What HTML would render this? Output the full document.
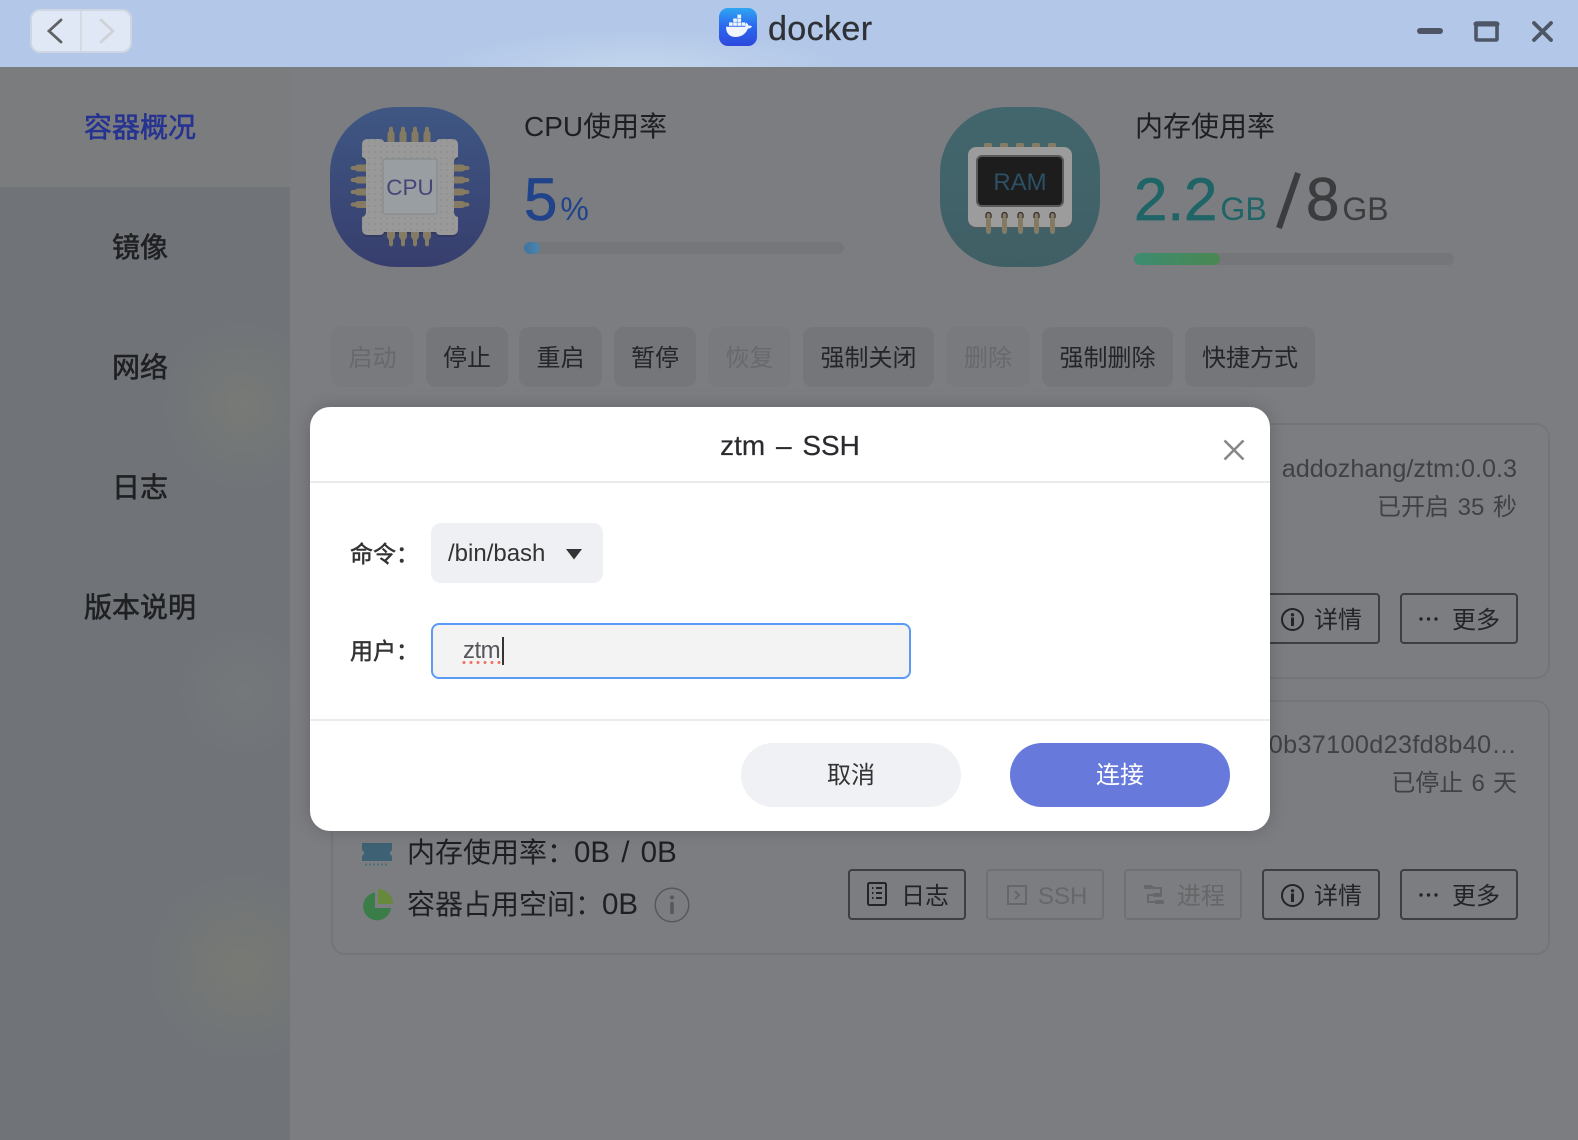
<!DOCTYPE html>
<html lang="zh"><head><meta charset="utf-8"><title>docker</title>
<style>
*{box-sizing:border-box;margin:0;padding:0}
html,body{width:1578px;height:1140px;overflow:hidden}
body{position:relative;font-family:"Liberation Sans","Noto Sans CJK SC",sans-serif;background:#7c7d81;color:#222}
.a{position:absolute;white-space:nowrap}
.side{left:140px;transform:translate(-50%,-50%);font-size:28px;font-weight:400;-webkit-text-stroke:.6px currentColor;color:#1f2022;line-height:1}
.tb{position:absolute;top:327px;height:60px;background:#75767a;border-radius:10px;font-size:24px;line-height:63px;text-align:center;color:#242528}
.tb.d{color:#68696c;background:#797a7e}
.card{position:absolute;left:331px;width:1219px;border:2px solid #747579;border-radius:14px}
.btn{position:absolute;width:118px;height:51px;border:2px solid #3d3e41;border-radius:4px;font-size:24px;color:#232427}
.btn.d{border-color:#6f7073;color:#666769}
.btn span{position:absolute;top:2px;line-height:47px}
.btn svg{position:absolute}
.rt{right:61px;font-size:24px;color:#404144;line-height:1}
.big{font-size:60px;line-height:66px;-webkit-text-stroke:.7px currentColor}
.big span{font-size:32px;-webkit-text-stroke:0;margin-left:3px}
</style></head><body>

<!-- header -->
<div class="a" style="left:0;top:0;width:1578px;height:67px;background:radial-gradient(ellipse 200px 40px at 640px 70px,#c3d6ee,rgba(195,214,238,0)),#b3c8e8"></div>
<div class="a" style="left:30px;top:9px;width:102px;height:44px;background:#e0e8f6;border:2px solid #cfd6e3;border-radius:10px"></div>
<div class="a" style="left:80px;top:11px;width:2px;height:40px;background:#d6dae2"></div>
<svg class="a" style="left:46px;top:18px" width="20" height="26" viewBox="0 0 20 26"><path d="M15 2 3 13l12 11" fill="none" stroke="#5f6164" stroke-width="2.800" stroke-linecap="round"/></svg>
<svg class="a" style="left:98px;top:18px" width="20" height="26" viewBox="0 0 20 26"><path d="M3 2l12 11L3 24" fill="none" stroke="#cfd2d6" stroke-width="2.800" stroke-linecap="round"/></svg>
<svg class="a" style="left:718px;top:7px" width="40" height="40" viewBox="0 0 40 40">
<defs><linearGradient id="dk" x1="0" y1="0" x2="0" y2="1"><stop offset="0" stop-color="#2fa6f2"/><stop offset=".45" stop-color="#2b6bf0"/><stop offset="1" stop-color="#2c48dc"/></linearGradient></defs>
<rect x="1" y="1" width="38" height="38" rx="9" fill="url(#dk)"/>
<g fill="#f1f5fc"><rect x="11" y="15.400" width="3.700" height="3.400"/><rect x="15.200" y="15.400" width="3.700" height="3.400"/><rect x="19.400" y="15.400" width="3.700" height="3.400"/><rect x="23.600" y="15.400" width="3.700" height="3.400"/><rect x="15.200" y="11.500" width="3.700" height="3.400"/><rect x="19.400" y="11.500" width="3.700" height="3.400"/><rect x="19.400" y="7.600" width="3.700" height="3.400"/>
<path d="M8 19.800H27.500c-.4-1.500-.1-3 .8-4 1.300.8 2 1.800 2.200 3 1.300-.4 2.700-.2 3.500.6-.8 1.500-2.300 2.200-4 2.100C27.800 26.800 23.500 30 17.300 30 11.200 30 8 26 8 19.800Z"/></g></svg>
<div class="a" style="left:768px;top:9px;font-size:34px;line-height:40px;color:#2f3136;letter-spacing:.4px;-webkit-text-stroke:.3px #2f3136">docker</div>
<svg class="a" style="left:1410px;top:14px" width="150" height="34" viewBox="0 0 150 34" fill="none" stroke="#4d5566" stroke-linecap="round">
<path d="M10 17h20" stroke-width="6"/><rect x="66" y="9" width="21" height="17" rx="1" stroke-width="3.600"/><path d="M66 10h21" stroke-width="5"/><path d="M124 9l17 17M141 9l-17 17" stroke-width="3.800"/></svg>

<!-- sidebar -->
<div class="a" style="left:0;top:67px;width:290px;height:1073px;background:radial-gradient(ellipse 85px 90px at 243px 339px,#777a76,rgba(119,122,118,0) 100%),radial-gradient(ellipse 70px 70px at 243px 625px,#75787a,rgba(117,120,122,0) 100%),radial-gradient(ellipse 100px 100px at 243px 900px,#777a74,rgba(119,122,116,0) 100%),#707378"></div>
<div class="a" style="left:0;top:67px;width:290px;height:120px;background:#7b7c7d"></div>
<div class="a side" style="top:128px;color:#263390">容器概况</div>
<div class="a side" style="top:248px">镜像</div>
<div class="a side" style="top:368px">网络</div>
<div class="a side" style="top:488px">日志</div>
<div class="a side" style="top:608px">版本说明</div>

<!-- CPU -->
<svg class="a" style="left:330px;top:107px" width="160" height="160" viewBox="0 0 160 160">
<defs><linearGradient id="cb" x1="0" y1="0" x2="0" y2="1"><stop offset="0" stop-color="#3f5783"/><stop offset="1" stop-color="#373e6e"/></linearGradient>
<pattern id="dots" width="6" height="6" patternUnits="userSpaceOnUse"><rect width="6" height="6" fill="#999"/><circle cx="3" cy="3" r=".7" fill="#848484"/></pattern></defs>
<rect width="160" height="160" rx="66" fill="url(#cb)"/>
<path id="chipS" d="M38 34h12q3 0 4 3h52q1-3 4-3h12q6 0 6 6v12q-4 1-4 5v50q0 4 4 5v12q0 6-6 6h-12q-3 0-4-3H54q-1 3-4 3H38q-6 0-6-6v-12q4-1 4-5V57q0-4-4-5V40q0-6 6-6Z" fill="#2d3350" opacity=".55"/>
<path d="M38 32h12q3 0 4 3h52q1-3 4-3h12q6 0 6 6v12q-4 1-4 5v50q0 4 4 5v12q0 6-6 6h-12q-3 0-4-3H54q-1 3-4 3H38q-6 0-6-6v-12q4-1 4-5V55q0-4-4-5V38q0-6 6-6Z" fill="url(#dots)"/>
<rect x="53" y="52" width="54" height="55" rx="2" fill="#989ea2" stroke="#85888b"/>
<text x="80" y="88" font-family="Liberation Sans" font-size="22.500" text-anchor="middle" fill="#454578">CPU</text>
<g fill="#857b62">
<path d="M57.500 35v-7q0-3 1.500-4v-3q2-3 4 0v3q1.500 1 1.500 4v7zM69.500 35v-7q0-3 1.500-4v-3q2-3 4 0v3q1.500 1 1.500 4v7zM81.500 35v-7q0-3 1.500-4v-3q2-3 4 0v3q1.500 1 1.500 4v7zM93.500 35v-7q0-3 1.500-4v-3q2-3 4 0v3q1.500 1 1.500 4v7z"/>
<path d="M57 125h8v5l-2 3v5q-2 3-4 0v-5l-2-3zM69 125h8v5l-2 3v5q-2 3-4 0v-5l-2-3zM81 125h8v5l-2 3v5q-2 3-4 0v-5l-2-3zM93 125h8v5l-2 3v5q-2 3-4 0v-5l-2-3z"/>
<path d="M36 57.500v7h-7q-3 0-4-1.500h-3q-3-2 0-4h3q1-1.500 4-1.500zM36 69.500v7h-7q-3 0-4-1.500h-3q-3-2 0-4h3q1-1.500 4-1.500zM36 81.500v7h-7q-3 0-4-1.500h-3q-3-2 0-4h3q1-1.500 4-1.500zM36 94v7h-7q-3 0-4-1.500h-3q-3-2 0-4h3q1-1.500 4-1.500z"/>
<path d="M124 57.500v7h7q3 0 4-1.500h3q3-2 0-4h-3q-1-1.500-4-1.500zM124 69.500v7h7q3 0 4-1.500h3q3-2 0-4h-3q-1-1.500-4-1.500zM124 81.500v7h7q3 0 4-1.500h3q3-2 0-4h-3q-1-1.500-4-1.500zM124 94v7h7q3 0 4-1.500h3q3-2 0-4h-3q-1-1.500-4-1.500z"/>
</g>
</svg>
<div class="a" style="left:524px;top:109px;font-size:28px;line-height:36px;color:#1e1f22">CPU使用率</div>
<div class="a big" style="left:524px;top:167px;color:#20438a">5<span>%</span></div>
<div class="a" style="left:524px;top:242px;width:320px;height:12px;border-radius:6px;background:#757679"></div>
<div class="a" style="left:524px;top:242px;width:16px;height:12px;border-radius:6px;background:linear-gradient(90deg,#3f74a0,#4c86ad)"></div>

<!-- RAM -->
<svg class="a" style="left:940px;top:107px" width="160" height="160" viewBox="0 0 160 160">
<defs><linearGradient id="rb" x1="0" y1="0" x2="0" y2="1"><stop offset="0" stop-color="#42666d"/><stop offset="1" stop-color="#405f65"/></linearGradient></defs>
<rect width="160" height="160" rx="66" fill="url(#rb)"/>
<g fill="#857b62"><rect x="44" y="36" width="8" height="6" rx="1.500"/><rect x="60" y="36" width="8" height="6" rx="1.500"/><rect x="76" y="36" width="8" height="6" rx="1.500"/><rect x="92" y="36" width="8" height="6" rx="1.500"/><rect x="108" y="36" width="8" height="6" rx="1.500"/></g>
<rect x="28" y="42" width="104" height="80" rx="8" fill="#555a5c" opacity=".5"/>
<rect x="28" y="40" width="104" height="80" rx="8" fill="#9c9c9c"/>
<rect x="37" y="49" width="86" height="50" rx="5" fill="#1d1d1d" stroke="#5a5a5a" stroke-width="2"/>
<text x="80" y="83" font-family="Liberation Sans" font-size="24" text-anchor="middle" fill="#2c5064">RAM</text>
<g fill="#857b62"><rect x="46" y="105" width="5" height="22" rx="2.500"/><rect x="62" y="105" width="5" height="22" rx="2.500"/><rect x="78" y="105" width="5" height="22" rx="2.500"/><rect x="94" y="105" width="5" height="22" rx="2.500"/><rect x="110" y="105" width="5" height="22" rx="2.500"/></g>
<g fill="none" stroke="#2e2e2e" stroke-width="1.200"><path d="M46 111v-3a2.500 2.500 0 0 1 5 0v3M62 111v-3a2.500 2.500 0 0 1 5 0v3M78 111v-3a2.500 2.500 0 0 1 5 0v3M94 111v-3a2.500 2.500 0 0 1 5 0v3M110 111v-3a2.500 2.500 0 0 1 5 0v3"/></g>
</svg>
<div class="a" style="left:1135px;top:109px;font-size:28px;line-height:36px;color:#1e1f22">内存使用率</div>
<div class="a big" style="left:1134px;top:167px;color:#1f6466">2.2<span>GB</span></div>
<svg class="a" style="left:1272px;top:170px" width="32" height="62" viewBox="0 0 32 62"><path d="M26 3 7 58" stroke="#3b3c3e" stroke-width="6" fill="none"/></svg>
<div class="a big" style="left:1306px;top:167px;color:#3b3c3e">8<span>GB</span></div>
<div class="a" style="left:1134px;top:253px;width:320px;height:12px;border-radius:6px;background:#757679"></div>
<div class="a" style="left:1134px;top:253px;width:86px;height:12px;border-radius:6px;background:linear-gradient(90deg,#3d8c72,#4a8752)"></div>

<!-- toolbar -->
<div class="tb d" style="left:331px;width:83px">启动</div>
<div class="tb" style="left:426px;width:82px">停止</div>
<div class="tb" style="left:519px;width:83px">重启</div>
<div class="tb" style="left:614px;width:82px">暂停</div>
<div class="tb d" style="left:708px;width:83px">恢复</div>
<div class="tb" style="left:803px;width:131px">强制关闭</div>
<div class="tb d" style="left:946px;width:84px">删除</div>
<div class="tb" style="left:1042px;width:131px">强制删除</div>
<div class="tb" style="left:1185px;width:130px">快捷方式</div>

<!-- card 1 -->
<div class="card" style="top:423px;height:256px"></div>
<div class="a rt" style="top:457px;font-size:25.200px;color:#404144">addozhang/ztm:0.0.3</div>
<div class="a rt" style="top:496px;word-spacing:2px">已开启 35 秒</div>
<div class="btn" style="left:1262px;top:593px"><svg style="left:16px;top:12px" width="25" height="25" viewBox="0 0 25 25"><circle cx="12.500" cy="12.500" r="10.500" fill="none" stroke="#232427" stroke-width="2"/><circle cx="12.500" cy="7.800" r="1.700" fill="#232427"/><rect x="11" y="10.500" width="3" height="8.500" fill="#232427"/></svg><span style="left:50px">详情</span></div>
<div class="btn" style="left:1400px;top:593px"><svg style="left:16px;top:21px" width="24" height="6" viewBox="0 0 24 6"><g fill="#232427"><circle cx="3" cy="3" r="1.700"/><circle cx="10.500" cy="3" r="1.700"/><circle cx="18" cy="3" r="1.700"/></g></svg><span style="left:50px">更多</span></div>

<!-- card 2 -->
<div class="card" style="top:700px;height:255px"></div>
<div class="a rt" style="top:733px;font-size:25.200px;letter-spacing:.35px">30b37100d23fd8b40…</div>
<div class="a rt" style="top:772px;word-spacing:1.500px">已停止 6 天</div>

<svg class="a" style="left:361px;top:842px" width="32" height="26" viewBox="0 0 32 26"><path d="M1 1h30v7l-2 2v2l2 2v5H1v-5l2-2v-2L1 8z" fill="#3e6273"/><path d="M4 22.500h24" stroke="#4a6b7b" stroke-width="2" stroke-dasharray="2 2"/></svg>
<div class="a" style="left:407px;top:835px;font-size:28px;line-height:36px;color:#1e1f22">内存使用率：</div>
<div class="a" style="left:574px;top:835px;font-size:29.500px;line-height:36px;color:#1e1f22;word-spacing:3px">0B / 0B</div>
<svg class="a" style="left:361px;top:888px" width="34" height="34" viewBox="0 0 34 34"><path d="M14 3.500A14 14 0 1 0 30 19H14Z" fill="#3a7d49" transform="translate(0 1)"/><path d="M17 1a15 15 0 0 1 15 15H17Z" fill="#66893c"/></svg>
<div class="a" style="left:407px;top:887px;font-size:28px;line-height:36px;color:#1e1f22">容器占用空间：</div>
<div class="a" style="left:602px;top:887px;font-size:29.500px;line-height:36px;color:#1e1f22">0B</div>
<svg class="a" style="left:654px;top:887px" width="36" height="36" viewBox="0 0 36 36"><circle cx="18" cy="18" r="16.800" fill="none" stroke="#57585b" stroke-width="1.500"/><circle cx="18" cy="10.500" r="2" fill="#57585b"/><rect x="16.200" y="15" width="3.600" height="12" rx="1" fill="#57585b"/></svg>

<div class="btn" style="left:848px;top:869px"><svg style="left:16px;top:10px" width="22" height="26" viewBox="0 0 22 26" fill="none" stroke="#232427" stroke-width="2"><rect x="2" y="2" width="18" height="22" rx="1.500"/><path d="M6 7h1.500M10 7h6M6 12h1.500M10 12h6M6 17h1.500M10 17h6"/></svg><span style="left:51px">日志</span></div>
<div class="btn d" style="left:986px;top:869px"><svg style="left:18px;top:13px" width="22" height="22" viewBox="0 0 22 22" fill="none" stroke="#666769" stroke-width="2"><rect x="2" y="2" width="18" height="18"/><path d="M9 7l4 4-4 4"/></svg><span style="left:50px">SSH</span></div>
<div class="btn d" style="left:1124px;top:869px"><svg style="left:16px;top:11px" width="24" height="26" viewBox="0 0 24 26" fill="none" stroke="#666769" stroke-width="2"><path d="M2 5h9v1h8v7H6v7h16"/><rect x="2" y="3" width="8" height="4" fill="#666769" stroke="none" rx="1"/><rect x="11" y="11" width="9" height="4" fill="#666769" stroke="none" rx="1"/><rect x="13" y="18" width="9" height="4" fill="#666769" stroke="none" rx="1"/></svg><span style="left:51px">进程</span></div>
<div class="btn" style="left:1262px;top:869px"><svg style="left:16px;top:12px" width="25" height="25" viewBox="0 0 25 25"><circle cx="12.500" cy="12.500" r="10.500" fill="none" stroke="#232427" stroke-width="2"/><circle cx="12.500" cy="7.800" r="1.700" fill="#232427"/><rect x="11" y="10.500" width="3" height="8.500" fill="#232427"/></svg><span style="left:50px">详情</span></div>
<div class="btn" style="left:1400px;top:869px"><svg style="left:16px;top:21px" width="24" height="6" viewBox="0 0 24 6"><g fill="#232427"><circle cx="3" cy="3" r="1.700"/><circle cx="10.500" cy="3" r="1.700"/><circle cx="18" cy="3" r="1.700"/></g></svg><span style="left:50px">更多</span></div>

<!-- modal -->
<div class="a" style="left:310px;top:407px;width:960px;height:424px;background:#fff;border-radius:20px;box-shadow:0 0 18px rgba(0,0,0,.18)"></div>
<div class="a" style="left:310px;top:481px;width:960px;height:2px;background:#ebebeb"></div>
<div class="a" style="left:310px;top:719px;width:960px;height:2px;background:#ebebeb"></div>
<div class="a" style="left:310px;width:960px;top:429px;line-height:34px;font-size:28px;text-align:center;color:#2a2b2e;word-spacing:3px;-webkit-text-stroke:.2px #2a2b2e">ztm – SSH</div>
<svg class="a" style="left:1222px;top:438px" width="24" height="24" viewBox="0 0 24 24"><path d="M2.500 2.500l19 19M21.500 2.500l-19 19" stroke="#85878a" stroke-width="2.600" fill="none"/></svg>

<div class="a" style="left:350px;top:539px;font-size:23px;line-height:30px;color:#333;-webkit-text-stroke:.5px #333">命令：</div>
<div class="a" style="left:431px;top:523px;width:172px;height:60px;border-radius:10px;background:#eff0f4"></div>
<div class="a" style="left:448px;top:539px;font-size:24px;line-height:30px;color:#333">/bin/bash</div>
<svg class="a" style="left:566px;top:549px" width="16" height="11" viewBox="0 0 16 11"><path d="M0 0h16l-8 10.500z" fill="#333"/></svg>

<div class="a" style="left:350px;top:636px;font-size:23px;line-height:30px;color:#333;-webkit-text-stroke:.5px #333">用户：</div>
<div class="a" style="left:431px;top:623px;width:480px;height:56px;border-radius:8px;background:#f3f3f4;border:2px solid #5a9bf5"></div>
<div class="a" style="left:463px;top:636px;font-size:24px;line-height:30px;color:#55565a;letter-spacing:-.5px">ztm</div>
<div class="a" style="left:502px;top:637px;width:1.500px;height:28px;background:#333"></div>
<svg class="a" style="left:462px;top:660px" width="40" height="5" viewBox="0 0 40 5"><path d="M2 2.500h36" stroke="#ef6f60" stroke-width="3" stroke-linecap="round" stroke-dasharray="0 7"/></svg>

<div class="a" style="left:741px;top:743px;width:220px;height:64px;border-radius:32px;background:#f0f1f5;text-align:center;line-height:66px;font-size:24px;color:#333">取消</div>
<div class="a" style="left:1010px;top:743px;width:220px;height:64px;border-radius:32px;background:#677adb;text-align:center;line-height:66px;font-size:24px;color:#fff">连接</div>
</body></html>
